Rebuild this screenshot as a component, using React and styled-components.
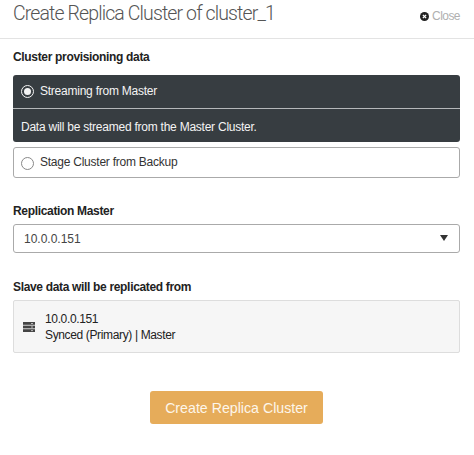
import React from 'react'
import styled, { createGlobalStyle } from 'styled-components'

const GlobalStyle = createGlobalStyle`
  html, body {
    margin: 0;
    background: #fff;
    font-family: "Liberation Sans", Arial, sans-serif;
    color: #222;
  }
`

// #region Styles
const Page = styled.div`
  width: 474px;
  height: 455px;
  overflow: hidden;
  box-sizing: border-box;
`
const Header = styled.header`
  display: flex;
  justify-content: space-between;
  align-items: flex-start;
  height: 39px;
  padding: 0 14px 0 13px;
  box-sizing: border-box;
  border-bottom: 1px solid #e3e3e3;
`
const Title = styled.h1`
  margin: 1px 0 0;
  font-family: Roboto, "Liberation Sans", sans-serif;
  font-size: 19.5px;
  font-weight: 300;
  letter-spacing: -0.88px;
  line-height: 26px;
  color: #555;
  white-space: nowrap;
`
const CloseLink = styled.div`
  display: flex;
  align-items: center;
  gap: 3px;
  margin-top: 9px;
  font-size: 12px;
  letter-spacing: -0.55px;
  line-height: 14px;
  color: #b0b0b0;
`
const Body = styled.main`
  padding: 0 14px 0 13px;
`
const Label = styled.div`
  margin: ${p => p.$top}px 0 ${p => p.$bottom}px;
  font-size: 12px;
  font-weight: 700;
  letter-spacing: -0.33px;
  line-height: 14px;
  color: #222;
`
const ActivePanel = styled.div`
  background: #373d41;
  border-radius: 3px;
  color: #f4f4f4;
  font-size: 12px;
  letter-spacing: -0.24px;
`
const PanelRow = styled.div`
  display: flex;
  align-items: center;
  gap: 6px;
  height: 34px;
  padding: 0 8px 2px;
  box-sizing: border-box;
  border-bottom: 1px solid #b5b8ba;
`
const PanelNote = styled.div`
  padding: 11px 8px 0;
  height: 33px;
  box-sizing: border-box;
  line-height: 14px;
`
const OptionBox = styled.div`
  display: flex;
  align-items: center;
  gap: 6px;
  height: 31px;
  margin-top: 5px;
  padding: 0 7px 1px;
  box-sizing: border-box;
  border: 1px solid #aaa;
  border-radius: 3px;
  font-size: 12px;
  letter-spacing: -0.24px;
  color: #333;
`
const Radio = styled.span`
  display: inline-flex;
  align-items: center;
  justify-content: center;
  width: 13px;
  height: 13px;
  margin-top: 2px;
  box-sizing: border-box;
  border: 1px solid ${p => (p.$checked ? '#f4f4f4' : '#888')};
  border-radius: 50%;
  background: ${p => (p.$checked ? 'transparent' : '#fff')};

  &::after {
    content: '';
    display: ${p => (p.$checked ? 'block' : 'none')};
    width: 7px;
    height: 7px;
    border-radius: 50%;
    background: #f4f4f4;
  }
`
const Select = styled.div`
  display: flex;
  justify-content: space-between;
  align-items: center;
  height: 29px;
  padding: 0 11px 0 10px;
  box-sizing: border-box;
  border: 1px solid #aaa;
  border-radius: 3px;
  font-size: 12px;
  color: #444;
`
const Caret = styled.span`
  width: 0;
  height: 0;
  margin-top: -2px;
  border-left: 4px solid transparent;
  border-right: 4px solid transparent;
  border-top: 6px solid #333;
`
const SourceBox = styled.div`
  display: flex;
  align-items: center;
  gap: 10px;
  height: 53px;
  padding: 0 9px;
  box-sizing: border-box;
  background: #f6f6f6;
  border: 1px solid #ddd;
  border-radius: 2px;
  font-size: 12px;
  letter-spacing: -0.36px;
  line-height: 16px;
  color: #222;
`
const Actions = styled.div`
  display: flex;
  justify-content: center;
  margin-top: 38px;
`
const PrimaryButton = styled.button`
  width: 173px;
  height: 33px;
  padding: 0;
  border: 0;
  border-radius: 3px;
  background: #e6ac5a;
  color: #fdf6ea;
  font-family: inherit;
  font-size: 14.2px;
`
// #endregion

const CloseIcon = () => (
  <svg width="9" height="9" viewBox="0 0 10 10">
    <circle cx="5" cy="5" r="5" fill="#222" />
    <path d="M3.2 3.2l3.6 3.6M6.8 3.2L3.2 6.8" stroke="#fff" strokeWidth="1.5" />
  </svg>
)

const ServerIcon = () => (
  <svg width="12" height="10" viewBox="0 0 12 10">
    <rect x="0" y="0" width="12" height="2.8" fill="#444" />
    <rect x="0" y="3.6" width="12" height="2.8" fill="#444" />
    <rect x="0" y="7.2" width="12" height="2.8" fill="#444" />
    <rect x="8" y="1" width="2" height="1" fill="#bbb" />
    <rect x="8" y="4.5" width="2" height="1" fill="#bbb" />
    <rect x="8" y="8.1" width="2" height="1" fill="#bbb" />
  </svg>
)

const App = () => (
  <Page>
    <GlobalStyle />
    <Header>
      <Title>Create Replica Cluster of cluster_1</Title>
      <CloseLink>
        <CloseIcon />
        Close
      </CloseLink>
    </Header>
    <Body>
      <Label $top={11} $bottom={11}>Cluster provisioning data</Label>
      <ActivePanel>
        <PanelRow>
          <Radio $checked />
          Streaming from Master
        </PanelRow>
        <PanelNote>Data will be streamed from the Master Cluster.</PanelNote>
      </ActivePanel>
      <OptionBox>
        <Radio />
        Stage Cluster from Backup
      </OptionBox>
      <Label $top={26} $bottom={6}>Replication Master</Label>
      <Select>
        10.0.0.151
        <Caret />
      </Select>
      <Label $top={27} $bottom={6}>Slave data will be replicated from</Label>
      <SourceBox>
        <ServerIcon />
        <div>
          <div>10.0.0.151</div>
          <div>Synced (Primary) | Master</div>
        </div>
      </SourceBox>
      <Actions>
        <PrimaryButton>Create Replica Cluster</PrimaryButton>
      </Actions>
    </Body>
  </Page>
)

export default App
